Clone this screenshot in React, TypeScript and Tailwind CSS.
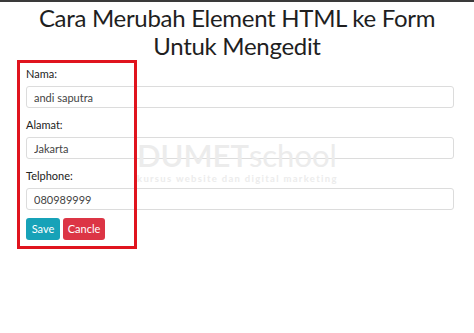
import React from "react";

export default function App() {
  const font = { fontFamily: "Lato, 'Open Sans', sans-serif" };
  return (
    <div className="relative w-[474px] h-[333px] bg-white overflow-hidden" style={font}>
      <div className="h-[2px] bg-[#3a3a3a]" />
      <h1 className="mt-[2px] text-center text-[24px] leading-[28px] text-[#1f1f1f] font-normal tracking-[-0.3px]">
        Cara Merubah Element HTML ke Form
        <br />
        Untuk Mengedit
      </h1>
      <form className="mt-[7px] pl-[26px] pr-[20px] flex flex-col">
        <label className="text-[11px] leading-[14px] text-[#222]">Nama:</label>
        <input
          readOnly
          value="andi saputra"
          className="mt-[5px] h-[22px] w-[428px] rounded-[3px] border border-[#dcdcdc] px-[7px] text-[11px] text-[#444] outline-none"
        />
        <label className="mt-[10px] text-[11px] leading-[14px] text-[#222]">Alamat:</label>
        <input
          readOnly
          value="Jakarta"
          className="mt-[5px] h-[22px] w-[428px] rounded-[3px] border border-[#dcdcdc] px-[7px] text-[11px] text-[#444] outline-none"
        />
        <label className="mt-[10px] text-[11px] leading-[14px] text-[#222]">Telphone:</label>
        <input
          readOnly
          value="080989999"
          className="mt-[5px] h-[22px] w-[428px] rounded-[3px] border border-[#dcdcdc] px-[7px] text-[11px] text-[#444] outline-none"
        />
        <div className="mt-[8px] flex gap-[3px]">
          <button type="button" className="h-[22px] w-[34px] rounded-[3px] bg-[#17a2b8] text-[11px] text-white">
            Save
          </button>
          <button type="button" className="h-[22px] w-[42px] rounded-[3px] bg-[#dc3545] text-[11px] text-white">
            Cancle
          </button>
        </div>
      </form>

      <div className="pointer-events-none absolute left-[137px] top-[140px] flex flex-col items-start text-[#ececec]">
        <div className="text-[31px] leading-[31px]">
          <span className="font-semibold">DUMET</span>
          <span>school</span>
        </div>
        <div className="mt-[2px] text-[9.5px] leading-[11px] font-bold tracking-[1.3px]">
          kursus website dan digital marketing
        </div>
      </div>

      <div className="pointer-events-none absolute left-[17px] top-[60px] w-[120px] h-[189px] border-[3px] border-[#e0141e]" />
    </div>
  );
}
